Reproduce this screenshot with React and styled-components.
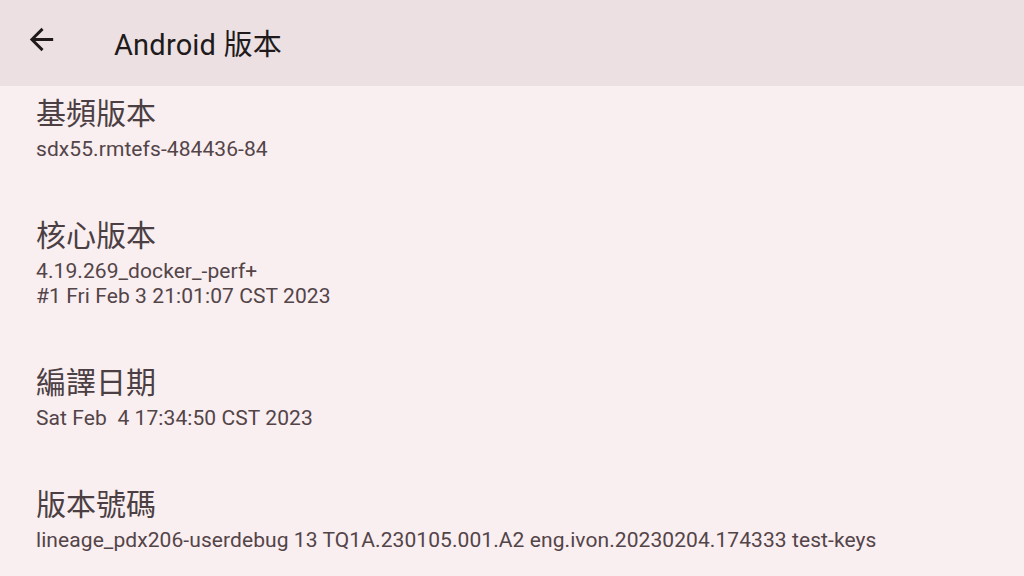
import React from 'react';
import styled, { createGlobalStyle } from 'styled-components';

const GlobalStyle = createGlobalStyle`
  html, body {
    margin: 0;
    padding: 0;
    height: 100%;
    background: #f9eef0;
  }
  #root {
    height: 100%;
  }
`;

const Screen = styled.div`
  display: flex;
  flex-direction: column;
  height: 576px;
  overflow: hidden;
  background: #f9eef0;
  font-family: Roboto, "Noto Sans CJK TC", sans-serif;
`;

const TopBar = styled.header`
  position: relative;
  z-index: 1;
  flex: 0 0 86px;
  display: flex;
  align-items: center;
  background: #ece0e2;
  padding: 0 0 2px 24px;
  box-sizing: border-box;
`;

const BackButton = styled.button`
  display: flex;
  align-items: center;
  justify-content: center;
  width: 35px;
  height: 35px;
  margin-bottom: 6px;
  padding: 0;
  border: 0;
  background: transparent;
  color: #201a1b;

  svg {
    width: 35px;
    height: 35px;
  }
`;

const Title = styled.h1`
  margin: 0 0 0 55px;
  font-size: 29px;
  font-weight: 400;
  color: #201a1b;
  letter-spacing: 0.2px;
`;

const List = styled.div`
  display: flex;
  flex-direction: column;
  margin-top: -18px;
`;

const Item = styled.div`
  display: flex;
  flex-direction: column;
  padding: 27px 36px 28px;
`;

const ItemTitle = styled.div`
  font-size: 30px;
  line-height: 38px;
  color: #4b3f43;
`;

const ItemValue = styled.div`
  margin-top: 4px;
  font-size: 21px;
  line-height: 25px;
  letter-spacing: 0.08px;
  color: #534448;
  white-space: pre;
`;

const ArrowBack = () => (
  <svg viewBox="0 0 24 24" fill="currentColor">
    <path d="M20 11H7.83l5.59-5.59L12 4l-8 8 8 8 1.41-1.41L7.83 13H20v-2z" />
  </svg>
);

const items = [
  { title: '基頻版本', value: 'sdx55.rmtefs-484436-84' },
  { title: '核心版本', value: '4.19.269_docker_-perf+\n#1 Fri Feb 3 21:01:07 CST 2023' },
  { title: '編譯日期', value: 'Sat Feb  4 17:34:50 CST 2023' },
  {
    title: '版本號碼',
    value: 'lineage_pdx206-userdebug 13 TQ1A.230105.001.A2 eng.ivon.20230204.174333 test-keys',
  },
];

export default function App() {
  return (
    <Screen>
      <GlobalStyle />
      <TopBar>
        <BackButton aria-label="返回">
          <ArrowBack />
        </BackButton>
        <Title>Android 版本</Title>
      </TopBar>
      <List>
        {items.map((it) => (
          <Item key={it.title}>
            <ItemTitle>{it.title}</ItemTitle>
            <ItemValue>{it.value}</ItemValue>
          </Item>
        ))}
      </List>
    </Screen>
  );
}
